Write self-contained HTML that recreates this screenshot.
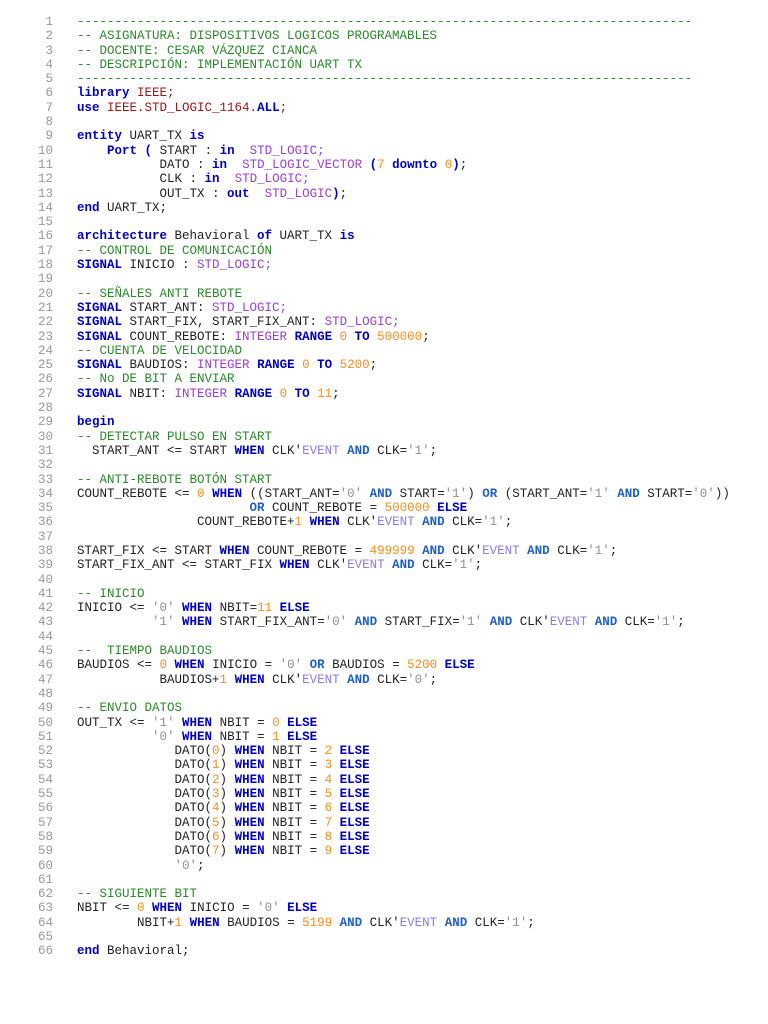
<!DOCTYPE html>
<html><head><meta charset="utf-8"><style>
html,body{margin:0;padding:0;background:#fff;width:768px;height:1024px;overflow:hidden}
.w{position:absolute;top:15px;left:0;}
pre{margin:0;font-family:"Liberation Mono",monospace;font-size:12.5px;line-height:14.3px;color:#222;}
.ln{position:absolute;left:22px;width:31px;text-align:right;color:#999;}
.code{position:absolute;left:77px;}
.k{color:#0000c8;font-weight:bold}
.a{color:#1e5fc8;font-weight:bold}
.t{color:#9b3fd6}
.n{color:#ff8c1a}
.c{color:#2a8a2a}
.s{color:#909090}
.e{color:#8a7cf0}
.l{color:#a01818}
</style></head><body><div class="w">
<pre class="ln">1
2
3
4
5
6
7
8
9
10
11
12
13
14
15
16
17
18
19
20
21
22
23
24
25
26
27
28
29
30
31
32
33
34
35
36
37
38
39
40
41
42
43
44
45
46
47
48
49
50
51
52
53
54
55
56
57
58
59
60
61
62
63
64
65
66</pre>
<pre class="code"><span class="c">----------------------------------------------------------------------------------</span>
<span class="c">-- ASIGNATURA: DISPOSITIVOS LOGICOS PROGRAMABLES</span>
<span class="c">-- DOCENTE: CESAR VÁZQUEZ CIANCA</span>
<span class="c">-- DESCRIPCIÓN: IMPLEMENTACIÓN UART TX</span>
<span class="c">----------------------------------------------------------------------------------</span>
<span class="k">library</span> <span class="l">IEEE;</span>
<span class="k">use</span> <span class="l">IEEE.STD_LOGIC_1164.</span><span class="k">ALL</span><span class="l">;</span>

<span class="k">entity</span> UART_TX <span class="k">is</span>
    <span class="k">Port</span> <span class="k">(</span> START : <span class="k">in</span>  <span class="t">STD_LOGIC;</span>
           DATO : <span class="k">in</span>  <span class="t">STD_LOGIC_VECTOR</span> <span class="k">(</span><span class="n">7</span> <span class="k">downto</span> <span class="n">0</span><span class="k">)</span>;
           CLK : <span class="k">in</span>  <span class="t">STD_LOGIC;</span>
           OUT_TX : <span class="k">out</span>  <span class="t">STD_LOGIC</span><span class="k">)</span>;
<span class="k">end</span> UART_TX;

<span class="k">architecture</span> Behavioral <span class="k">of</span> UART_TX <span class="k">is</span>
<span class="c">-- CONTROL DE COMUNICACIÓN</span>
<span class="k">SIGNAL</span> INICIO : <span class="t">STD_LOGIC;</span>

<span class="c">-- SEÑALES ANTI REBOTE</span>
<span class="k">SIGNAL</span> START_ANT: <span class="t">STD_LOGIC;</span>
<span class="k">SIGNAL</span> START_FIX, START_FIX_ANT: <span class="t">STD_LOGIC;</span>
<span class="k">SIGNAL</span> COUNT_REBOTE: <span class="t">INTEGER</span> <span class="k">RANGE</span> <span class="n">0</span> <span class="k">TO</span> <span class="n">500000</span>;
<span class="c">-- CUENTA DE VELOCIDAD</span>
<span class="k">SIGNAL</span> BAUDIOS: <span class="t">INTEGER</span> <span class="k">RANGE</span> <span class="n">0</span> <span class="k">TO</span> <span class="n">5200</span>;
<span class="c">-- No DE BIT A ENVIAR</span>
<span class="k">SIGNAL</span> NBIT: <span class="t">INTEGER</span> <span class="k">RANGE</span> <span class="n">0</span> <span class="k">TO</span> <span class="n">11</span>;

<span class="k">begin</span>
<span class="c">-- DETECTAR PULSO EN START</span>
  START_ANT &lt;= START <span class="k">WHEN</span> CLK'<span class="e">EVENT</span> <span class="a">AND</span> CLK=<span class="s">'1'</span>;

<span class="c">-- ANTI-REBOTE BOTÓN START</span>
COUNT_REBOTE &lt;= <span class="n">0</span> <span class="k">WHEN</span> ((START_ANT=<span class="s">'0'</span> <span class="a">AND</span> START=<span class="s">'1'</span>) <span class="a">OR</span> (START_ANT=<span class="s">'1'</span> <span class="a">AND</span> START=<span class="s">'0'</span>))
                       <span class="a">OR</span> COUNT_REBOTE = <span class="n">500000</span> <span class="k">ELSE</span>
                COUNT_REBOTE+<span class="n">1</span> <span class="k">WHEN</span> CLK'<span class="e">EVENT</span> <span class="a">AND</span> CLK=<span class="s">'1'</span>;

START_FIX &lt;= START <span class="k">WHEN</span> COUNT_REBOTE = <span class="n">499999</span> <span class="a">AND</span> CLK'<span class="e">EVENT</span> <span class="a">AND</span> CLK=<span class="s">'1'</span>;
START_FIX_ANT &lt;= START_FIX <span class="k">WHEN</span> CLK'<span class="e">EVENT</span> <span class="a">AND</span> CLK=<span class="s">'1'</span>;

<span class="c">-- INICIO</span>
INICIO &lt;= <span class="s">'0'</span> <span class="k">WHEN</span> NBIT=<span class="n">11</span> <span class="k">ELSE</span>
          <span class="s">'1'</span> <span class="k">WHEN</span> START_FIX_ANT=<span class="s">'0'</span> <span class="a">AND</span> START_FIX=<span class="s">'1'</span> <span class="a">AND</span> CLK'<span class="e">EVENT</span> <span class="a">AND</span> CLK=<span class="s">'1'</span>;

<span class="c">--  TIEMPO BAUDIOS</span>
BAUDIOS &lt;= <span class="n">0</span> <span class="k">WHEN</span> INICIO = <span class="s">'0'</span> <span class="a">OR</span> BAUDIOS = <span class="n">5200</span> <span class="k">ELSE</span>
           BAUDIOS+<span class="n">1</span> <span class="k">WHEN</span> CLK'<span class="e">EVENT</span> <span class="a">AND</span> CLK=<span class="s">'0'</span>;

<span class="c">-- ENVIO DATOS</span>
OUT_TX &lt;= <span class="s">'1'</span> <span class="k">WHEN</span> NBIT = <span class="n">0</span> <span class="k">ELSE</span>
          <span class="s">'0'</span> <span class="k">WHEN</span> NBIT = <span class="n">1</span> <span class="k">ELSE</span>
             DATO(<span class="n">0</span>) <span class="k">WHEN</span> NBIT = <span class="n">2</span> <span class="k">ELSE</span>
             DATO(<span class="n">1</span>) <span class="k">WHEN</span> NBIT = <span class="n">3</span> <span class="k">ELSE</span>
             DATO(<span class="n">2</span>) <span class="k">WHEN</span> NBIT = <span class="n">4</span> <span class="k">ELSE</span>
             DATO(<span class="n">3</span>) <span class="k">WHEN</span> NBIT = <span class="n">5</span> <span class="k">ELSE</span>
             DATO(<span class="n">4</span>) <span class="k">WHEN</span> NBIT = <span class="n">6</span> <span class="k">ELSE</span>
             DATO(<span class="n">5</span>) <span class="k">WHEN</span> NBIT = <span class="n">7</span> <span class="k">ELSE</span>
             DATO(<span class="n">6</span>) <span class="k">WHEN</span> NBIT = <span class="n">8</span> <span class="k">ELSE</span>
             DATO(<span class="n">7</span>) <span class="k">WHEN</span> NBIT = <span class="n">9</span> <span class="k">ELSE</span>
             <span class="s">'0'</span>;

<span class="c">-- SIGUIENTE BIT</span>
NBIT &lt;= <span class="n">0</span> <span class="k">WHEN</span> INICIO = <span class="s">'0'</span> <span class="k">ELSE</span>
        NBIT+<span class="n">1</span> <span class="k">WHEN</span> BAUDIOS = <span class="n">5199</span> <span class="a">AND</span> CLK'<span class="e">EVENT</span> <span class="a">AND</span> CLK=<span class="s">'1'</span>;

<span class="k">end</span> Behavioral;</pre>
</div></body></html>
